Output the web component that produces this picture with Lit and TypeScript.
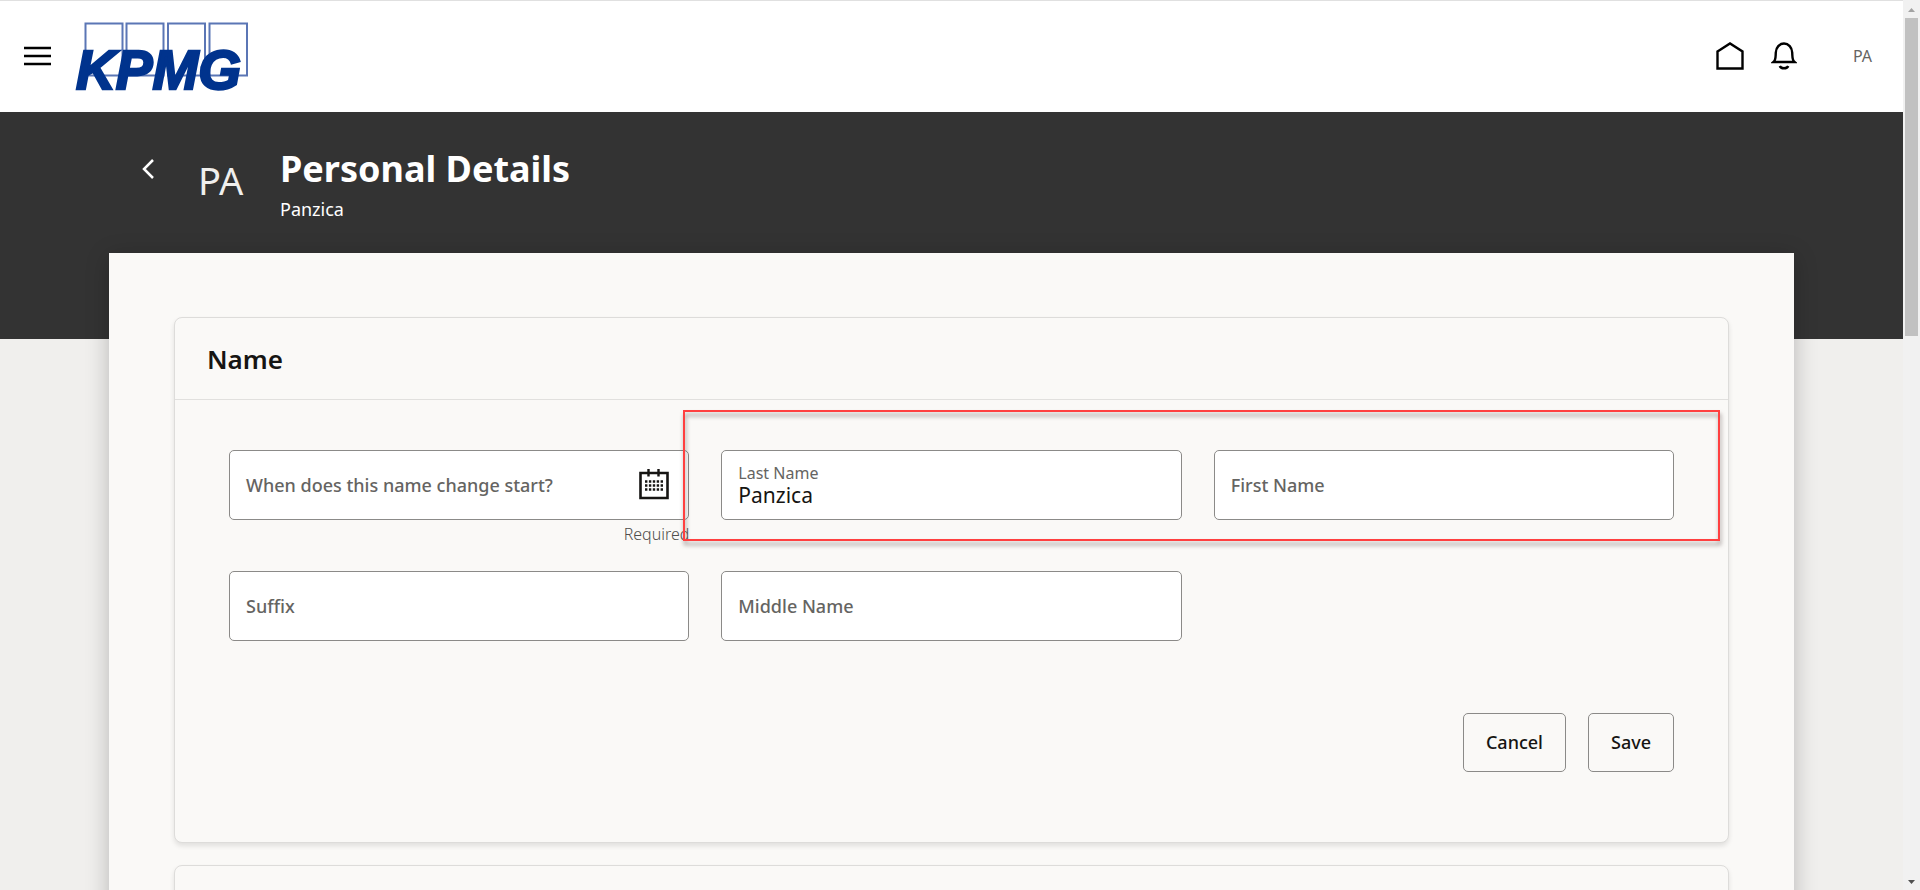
import { LitElement, html, css, nothing } from "lit";
import { customElement, property } from "lit/decorators.js";

@customElement("text-field")
class TextField extends LitElement {
  @property() label = "";
  @property() value = "";
  @property() hint = "";
  @property({ type: Boolean }) date = false;

  static styles = css`
    :host {
      display: block;
    }
    .box {
      display: grid;
      grid-template-columns: 1fr auto;
      align-items: center;
      box-sizing: border-box;
      height: 70px;
      border: 1px solid #8b8a88;
      border-radius: 5px;
      background: #fff;
    }
    .label,
    .input {
      grid-area: 1 / 1;
      padding: 0 16px;
      font-family: inherit;
    }
    .label {
      font-size: 18px;
      line-height: 24px;
      font-weight: 500;
      color: #656462;
      pointer-events: none;
      z-index: 1;
    }
    .input {
      box-sizing: border-box;
      width: 100%;
      height: 68px;
      border: 0;
      outline: 0;
      background: transparent;
      font-size: 21px;
      color: #161513;
    }
    .filled .label {
      align-self: start;
      padding-top: 11px;
      font-size: 16px;
      line-height: 22px;
      font-weight: 400;
    }
    .filled .input {
      padding-top: 20px;
    }
    .picker {
      display: flex;
      padding: 0 0 2px;
      margin-right: 19px;
      border: 0;
      background: none;
    }
    .hint {
      margin-top: 3px;
      text-align: right;
      font-size: 16px;
      line-height: 22px;
      font-weight: 300;
      color: #4f4e4c;
    }
  `;

  render() {
    return html`
      <div class="box ${this.value ? "filled" : ""}">
        <label class="label" for="control">${this.label}</label>
        <input class="input" id="control" type="text" .value=${this.value} />
        ${this.date
          ? html`<button class="picker" type="button" aria-label="Select date">
              <svg width="30" height="32" viewBox="0 0 30 32">
                <path d="M1.5 5h27v25h-27z" fill="none" stroke="#161513" stroke-width="2.6" />
                <path d="M9.500 1v7.500M19.500 1v7.500" stroke="#161513" stroke-width="2.4" />
                <path
                  d="M6 13.500h18M6 17.500h18M6 21.500h18"
                  stroke="#161513"
                  stroke-width="2.4"
                  stroke-dasharray="2.4 1.5"
                />
              </svg>
            </button>`
          : nothing}
      </div>
      ${this.hint ? html`<div class="hint">${this.hint}</div>` : nothing}
    `;
  }
}

@customElement("app-root")
class AppRoot extends LitElement {
  static styles = css`
    :host {
      display: grid;
      grid-template-columns: 1fr 17px;
      height: 100vh;
      overflow: hidden;
      font-family: "Noto Sans", "Open Sans", sans-serif;
      color: #161513;
      background: #f0efed;
    }
    .page {
      min-width: 0;
      overflow: hidden;
    }
    button {
      font-family: inherit;
      color: inherit;
    }
    .topbar {
      display: flex;
      align-items: center;
      box-sizing: border-box;
      height: 112px;
      padding: 0 31px 2px 24px;
      border-top: 1px solid #e0e0e0;
      background: #fff;
    }
    .icon {
      display: flex;
      padding: 0;
      border: 0;
      background: none;
    }
    .logo {
      display: block;
      margin-left: 16px;
    }
    .wordmark {
      font: italic bold 55px "Liberation Sans", sans-serif;
      fill: #00338d;
      stroke: #00338d;
      stroke-width: 2.4;
    }
    .tools {
      display: flex;
      align-items: center;
      gap: 27px;
      margin-left: auto;
    }
    .user {
      margin-left: 29px;
      font-size: 16px;
      line-height: 22px;
      color: #656462;
    }
    .banner {
      display: flex;
      align-items: flex-start;
      box-sizing: border-box;
      min-height: 227px;
      padding: 33px 109px 0 141px;
      color: #fff;
      background: #333;
    }
    .back {
      margin-top: 13px;
    }
    .avatar {
      margin-left: 43px;
      width: 82px;
      margin-top: 11px;
      font-size: 38px;
      line-height: 48px;
      color: #f0efed;
    }
    .title {
      margin: 0;
      font-size: 36px;
      line-height: 48px;
      font-weight: 700;
    }
    .subtitle {
      margin: 4px 0 0;
      font-size: 18px;
      line-height: 24px;
    }
    .sheet {
      position: relative;
      display: grid;
      gap: 22px;
      margin: -86px 109px 0;
      padding: 64px 65px 0;
      background: #faf9f7;
      box-shadow: 0 4px 22px rgba(0, 0, 0, 0.24);
    }
    .card {
      border: 1px solid #dddcda;
      border-radius: 8px;
      box-shadow: 0 3px 5px rgba(0, 0, 0, 0.1);
      background: #faf9f7;
    }
    .next {
      height: 120px;
    }
    .heading {
      margin: 0;
      padding: 23px 32px 22px;
      border-bottom: 1px solid #e1e0de;
      font-size: 26px;
      line-height: 36px;
      font-weight: 600;
    }
    .form {
      position: relative;
      padding: 50px 54px 70px;
    }
    .fields {
      display: grid;
      grid-template-columns: repeat(3, 1fr);
      gap: 26px 32px;
    }
    .actions {
      display: flex;
      justify-content: flex-end;
      gap: 22px;
      margin-top: 72px;
    }
    .button {
      height: 59px;
      padding: 0 22px 2px;
      border: 1px solid #8b8a88;
      border-radius: 5px;
      background: transparent;
      font-size: 18px;
      font-weight: 500;
    }
    .highlight {
      position: absolute;
      top: 10px;
      left: 508px;
      right: 8px;
      height: 127px;
      border: 2px solid #ff4040;
      filter: drop-shadow(1px 4px 2px rgba(60, 40, 40, 0.5));
      pointer-events: none;
    }
    .scroll {
      display: flex;
      flex-direction: column;
      align-items: center;
      background: #f1f1f1;
    }
    .arrow {
      display: block;
      margin-top: 1px;
    }
    .thumb {
      width: 13px;
      height: 318px;
      background: #c1c1c1;
    }
    .down {
      margin-top: auto;
    }
  `;

  render() {
    return html`
      <div class="page">
        <header class="topbar">
          <button class="icon" type="button" aria-label="Menu">
            <svg width="27" height="20" viewBox="0 0 27 20">
              <path d="M0 2h27M0 10h27M0 18h27" stroke="#000" stroke-width="2.6" />
            </svg>
          </button>
          <svg class="logo" width="196" height="100" viewBox="0 -6 196 100" role="img" aria-label="KPMG">
            <path
              d="M18.500 11.500h37v52h-37zM59.500 11.500h37v52h-37zM101 11.500h37v52h-37zM142.500 11.500h37.500v52h-37.500z"
              fill="#fff"
              stroke="#5b76b5"
              stroke-width="2"
            />
            <text class="wordmark" x="9" y="77">KPMG</text>
          </svg>
          <div class="tools">
            <button class="icon" type="button" aria-label="Home">
              <svg width="28" height="28" viewBox="0 0 28 28">
                <path d="M1.500 9.500L14 1.500l12.500 8v17h-25z" fill="none" stroke="#000" stroke-width="2.400" />
              </svg>
            </button>
            <button class="icon" type="button" aria-label="Notifications">
              <svg width="26" height="28" viewBox="0 0 26 28">
                <path
                  d="M2.500 20h21c-2.500-2-2-5-2.300-9.500C21 5.500 17.500 1.500 13 1.500S5 5.500 4.800 10.500C4.500 15 5 18 2.500 20z"
                  fill="none"
                  stroke="#000"
                  stroke-width="2.400"
                />
                <path d="M8.800 24c1 3 7.400 3 8.400 0" fill="none" stroke="#000" stroke-width="2.400" />
              </svg>
            </button>
            <span class="user">PA</span>
          </div>
        </header>
        <div class="banner">
          <button class="icon back" type="button" aria-label="Back">
            <svg width="14" height="22" viewBox="0 0 14 22">
              <path d="M12 2L3 11l9 9" fill="none" stroke="#fff" stroke-width="2.500" />
            </svg>
          </button>
          <span class="avatar">PA</span>
          <div>
            <h1 class="title">Personal Details</h1>
            <p class="subtitle">Panzica</p>
          </div>
        </div>
        <main class="sheet">
          <section class="card">
            <h2 class="heading">Name</h2>
            <form class="form">
              <div class="fields">
                <text-field label="When does this name change start?" hint="Required" date></text-field>
                <text-field label="Last Name" value="Panzica"></text-field>
                <text-field label="First Name"></text-field>
                <text-field label="Suffix"></text-field>
                <text-field label="Middle Name"></text-field>
              </div>
              <div class="actions">
                <button class="button" type="button">Cancel</button>
                <button class="button" type="button">Save</button>
              </div>
              <div class="highlight"></div>
            </form>
          </section>
          <section class="card next"></section>
        </main>
      </div>
      <div class="scroll" aria-hidden="true">
        <svg class="arrow" width="17" height="17" viewBox="0 0 17 17">
          <path d="M5 11l3.500-4 3.500 4z" fill="#a3a3a3" />
        </svg>
        <div class="thumb"></div>
        <svg class="arrow down" width="17" height="17" viewBox="0 0 17 17">
          <path d="M5 7l3.500 4 3.500-4z" fill="#505050" />
        </svg>
      </div>
    `;
  }
}
